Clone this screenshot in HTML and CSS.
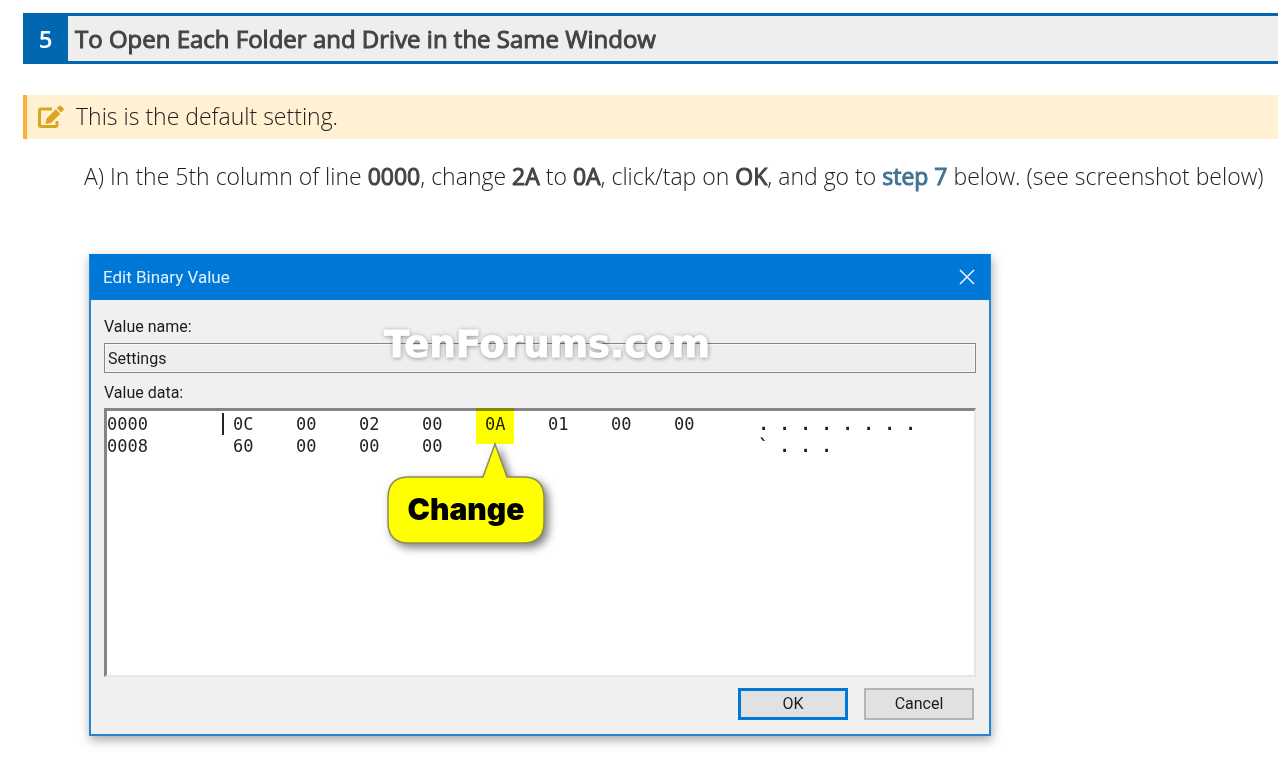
FILE: index.html
```
<!DOCTYPE html>
<html lang="en">
<head>
<meta charset="utf-8">
<title>To Open Each Folder and Drive in the Same Window</title>
<link rel="stylesheet" href="styles.css">
</head>
<body>
<main class="article">
  <h2 class="step"><span class="step-number">5</span><span class="step-title">To Open Each Folder and Drive in the Same Window</span></h2>

  <p class="note">
    <svg class="note-icon" viewBox="0 0 26 24" aria-hidden="true">
      <path d="M14 4H3Q1.500 4 1.500 5.500V20Q1.500 21.500 3 21.500H17.500Q19 21.500 19 20V16" fill="none" stroke="#daa520" stroke-width="3"/>
      <path d="M7.500 19L8.500 13.500L17.800 4.200L22.300 8.700L13 18L7.500 19Z M18.800 3.200L21 1Q22 0 23 1L25.300 3.300Q26.300 4.300 25.300 5.300L23.300 7.600Z" fill="#daa520"/>
    </svg>
    <span>This is the default setting.</span>
  </p>

  <p class="instruction">A) In the 5th column of line <b>0000</b>, change <b>2A</b> to <b>0A</b>, click/tap on <b>OK</b>, and go to <a href="#step7">step 7</a> below. (see screenshot below)</p>

  <section class="dialog" aria-label="Edit Binary Value">
    <header class="titlebar">
      <h3 class="title">Edit Binary Value</h3>
      <button class="close" type="button" aria-label="Close">
        <svg viewBox="0 0 16 16" width="16" height="16"><path d="M1 1L15 15M15 1L1 15" fill="none" stroke="#e4f1fc" stroke-width="1.600"/></svg>
      </button>
    </header>
    <form class="dialog-body">
      <label for="value-name">Value name:</label>
      <div class="name-field">
        <input id="value-name" type="text" value="Settings" readonly>
        <span class="watermark">TenForums.com</span>
      </div>
      <div class="data-label" id="data-label">Value data:</div>
      <div class="hex-box">
        <table class="hex" aria-labelledby="data-label">
          <tr><th class="caret">0000</th><td>0C</td><td>00</td><td>02</td><td>00</td><td class="marked">0A<span class="highlight"></span>
            <div class="callout">
              <svg class="callout-shape" viewBox="0 0 158 102" aria-hidden="true"><path d="M22 34H96L108 1L120 34H136Q157 34 157 55V79Q157 100 136 100H22Q1 100 1 79V55Q1 34 22 34Z" fill="#ff0" stroke="#8c8c5a" stroke-width="1.500"/></svg>
              <span class="callout-text">Change</span>
            </div></td><td>01</td><td>00</td><td>00</td>
            <td class="ascii"><span>.</span><span>.</span><span>.</span><span>.</span><span>.</span><span>.</span><span>.</span><span>.</span></td></tr>
          <tr><th>0008</th><td>60</td><td>00</td><td>00</td><td>00</td><td></td><td></td><td></td><td></td>
            <td class="ascii"><span>`</span><span>.</span><span>.</span><span>.</span></td></tr>
        </table>
      </div>
      <div class="actions">
        <button class="button primary" type="button">OK</button>
        <button class="button" type="button">Cancel</button>
      </div>
    </form>
  </section>
</main>
</body>
</html>
```
FILE: styles.css
```
* { box-sizing: border-box; }
body {
  margin: 0;
  background: #fff;
  color: #1e1e1e;
  font: 300 23px/32px "Open Sans", "Noto Sans", sans-serif;
  overflow-x: hidden;
}
.article { padding: 13px 0 24px 23px; }
.step {
  display: flex;
  margin: 0;
  background: #eee;
  border: solid #0067b0;
  border-width: 3px 0;
  color: #444;
  font-size: 24px;
  font-weight: 400;
  line-height: 45px;
}
.step-number {
  width: 45px;
  background: #0067b0;
  color: #fff;
  font-weight: 600;
  text-align: center;
}
.step-title {
  padding-left: 7px;
  -webkit-text-stroke: 1px;
}
.note {
  display: flex;
  align-items: center;
  gap: 12px;
  margin: 31px 0 0;
  padding: 0 0 1px 11px;
  background: #fff1d2;
  border-left: 4px solid #fbb03b;
  line-height: 43px;
}
.note-icon { width: 26px; height: 24px; }
.instruction {
  margin: 21px 0 0;
  padding-left: 61px;
  white-space: nowrap;
}
.instruction b,
.instruction a {
  color: #444;
  font-weight: 400;
  -webkit-text-stroke: 1px;
}
.instruction a { color: #417394; text-decoration: none; }

.dialog {
  max-width: 902px;
  margin: 62px 0 0 66px;
  background: #f0f0f0;
  border: 2px solid #2484d8;
  box-shadow: 1px 4px 10px rgba(0, 0, 0, .35);
  color: #1c1c1c;
  font: 400 16px/22px Roboto, "Liberation Sans", sans-serif;
}
.titlebar {
  display: flex;
  justify-content: space-between;
  align-items: center;
  height: 46px;
  margin: -2px -1px 0;
  padding: 0 15px 0 13px;
  background: #0078d7;
  color: #e4f1fc;
}
.title { margin: 0; font: inherit; font-size: 17px; }
.close {
  display: flex;
  padding: 0;
  border: 0;
  background: none;
}
.dialog-body { padding: 16px 13px 14px 13px; }
.dialog-body label { display: block; }
.name-field { position: relative; margin-top: 5px; }
.name-field input {
  display: block;
  width: 100%;
  height: 30px;
  padding: 0 3px;
  background: #eee;
  border: 1px solid #858585;
  outline: 1px solid #f8f8f8;
  outline-offset: -2px;
  color: inherit;
  font: inherit;
}
.watermark {
  position: absolute;
  top: -18px;
  left: 280px;
  color: #fff;
  font: 700 37px/40px "DejaVu Sans", sans-serif;
  -webkit-text-stroke: 1px;
  text-shadow: 0 0 5px rgba(0, 0, 0, .3), 1px 2px 4px rgba(0, 0, 0, .2);
}
.data-label { margin-top: 9px; }
.hex-box {
  height: 269px;
  margin-top: 4px;
  padding-top: 2px;
  background: #fff;
  border: solid;
  border-width: 3px 2px 2px 3px;
  border-color: #858585 #e6e6e6 #e6e6e6 #858585;
}
.hex {
  border-collapse: collapse;
  color: #222;
  font: 400 17px/22px "DejaVu Sans Mono", monospace;
}
.hex th, .hex td { padding: 0; font-weight: 400; text-align: left; }
.hex th { width: 126px; }
.hex td { width: 63px; }
.hex .caret {
  background: linear-gradient(#222, #222) 115px 0 / 2px 100% no-repeat;
}
.hex .ascii { display: flex; width: auto; padding-left: 16px; font-weight: 700; }
.ascii span { width: 21px; text-align: center; }
.hex .marked { position: relative; }
.highlight {
  position: absolute;
  top: -5px;
  left: -9px;
  width: 38px;
  height: 36px;
  background: #ff0;
  mix-blend-mode: multiply;
}
.callout {
  position: absolute;
  top: 30px;
  left: -98px;
  width: 158px;
  height: 102px;
}
.callout-shape {
  display: block;
  overflow: visible;
  filter: drop-shadow(4px 4px 4px rgba(0, 0, 0, .5));
}
.callout-text {
  position: absolute;
  inset: 34px 0 0;
  color: #000;
  font: 900 30px/64px Inter, sans-serif;
  text-align: center;
}
.actions {
  display: flex;
  justify-content: flex-end;
  gap: 16px;
  margin-top: 11px;
  padding-right: 2px;
}
.button {
  width: 110px;
  height: 32px;
  padding: 0;
  background: #e1e1e1;
  border: 2px solid #b4b4b4;
  color: inherit;
  font: inherit;
}
.primary { border: 3px solid #0078d7; }
```
